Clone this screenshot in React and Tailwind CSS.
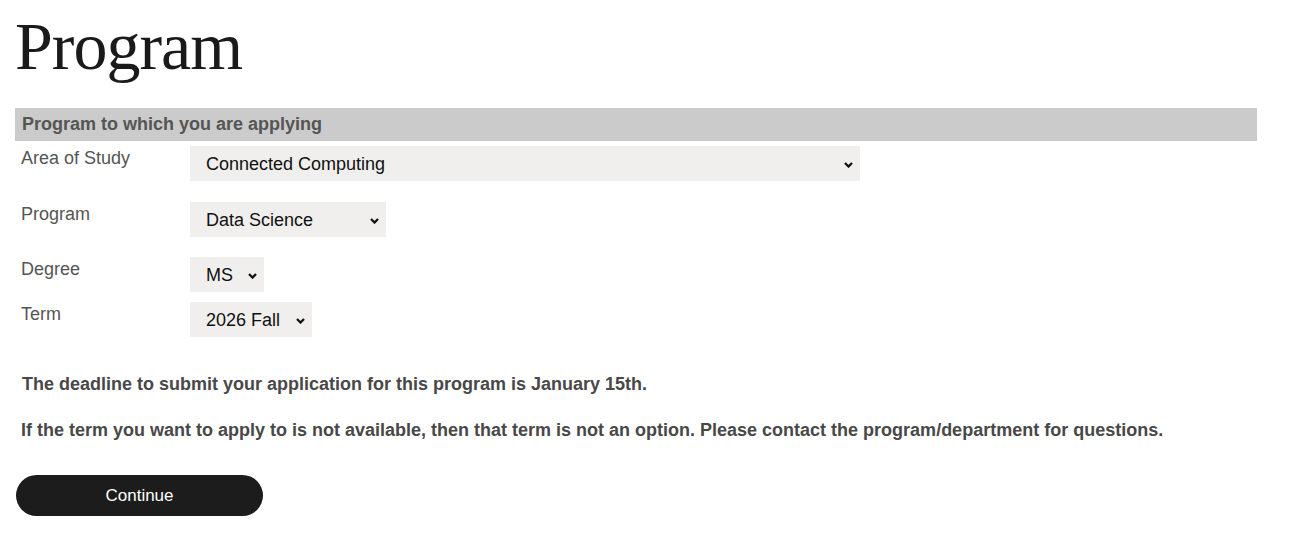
import React, { useState } from "react";

const ChevronDown = () => (
  <svg width="9" height="6" viewBox="0 0 9 6" className="shrink-0">
    <path d="M1 1 L4.5 4.5 L8 1" fill="none" stroke="#111" strokeWidth="2.3" />
  </svg>
);

// looks like a native select, but drawn so the chevron sits where the screenshot has it
const FakeSelect = ({ value, width }) => (
  <div
    className={`flex items-center justify-between h-[35px] pl-4 pr-[7px] pt-[2px] bg-[#f0efed] text-[18px] text-[#111] ${width}`}>
    <span>{value}</span>
    <ChevronDown />
  </div>
);

const rows = [
  { label: "Area of Study", value: "Connected Computing", width: "w-[670px]", mt: "mt-[5px]" },
  { label: "Program", value: "Data Science", width: "w-[196px]", mt: "mt-[21px]" },
  { label: "Degree", value: "MS", width: "w-[74px]", mt: "mt-[20px]" },
  { label: "Term", value: "2026 Fall", width: "w-[122px]", mt: "mt-[10px]" },
];

const App = () => {
  const [submitted, setSubmitted] = useState(false);

  return (
    <div className="min-h-[553px] bg-white px-[15px] font-['Liberation_Sans',Arial,sans-serif]">
      <h1 className="pt-[12px] text-[68px] leading-none tracking-[-1px] text-[#1a1a1a] font-['Liberation_Serif','Times_New_Roman',serif]">
        Program
      </h1>

      <div className="mt-[28px] w-[1242px] h-[33px] bg-[#cbcbcb] pl-[7px] pt-[6px] text-[18px] leading-[20px] font-bold text-[#555]">
        Program to which you are applying
      </div>

      {rows.map((row) => (
        <div key={row.label} className={`flex ${row.mt}`}>
          <div className="w-[175px] pl-[6px] pt-[2px] text-[18px] leading-[20px] text-[#555]">
            {row.label}
          </div>
          <FakeSelect value={row.value} width={row.width} />
        </div>
      ))}

      <p className="mt-[37px] pl-[7px] text-[18px] leading-[20px] font-bold text-[#484848]">
        The deadline to submit your application for this program is January 15th.
      </p>
      <p className="mt-[26px] pl-[6px] text-[18px] leading-[20px] font-bold text-[#484848]">
        If the term you want to apply to is not available, then that term is not an option. Please
        contact the program/department for questions.
      </p>

      <button
        type="button"
        onClick={() => setSubmitted(true)}
        className="mt-[35px] ml-px w-[247px] h-[41px] rounded-full bg-[#1c1c1c] text-[17px] text-white">
        {submitted ? "Continue" : "Continue"}
      </button>
    </div>
  );
};

export default App;
